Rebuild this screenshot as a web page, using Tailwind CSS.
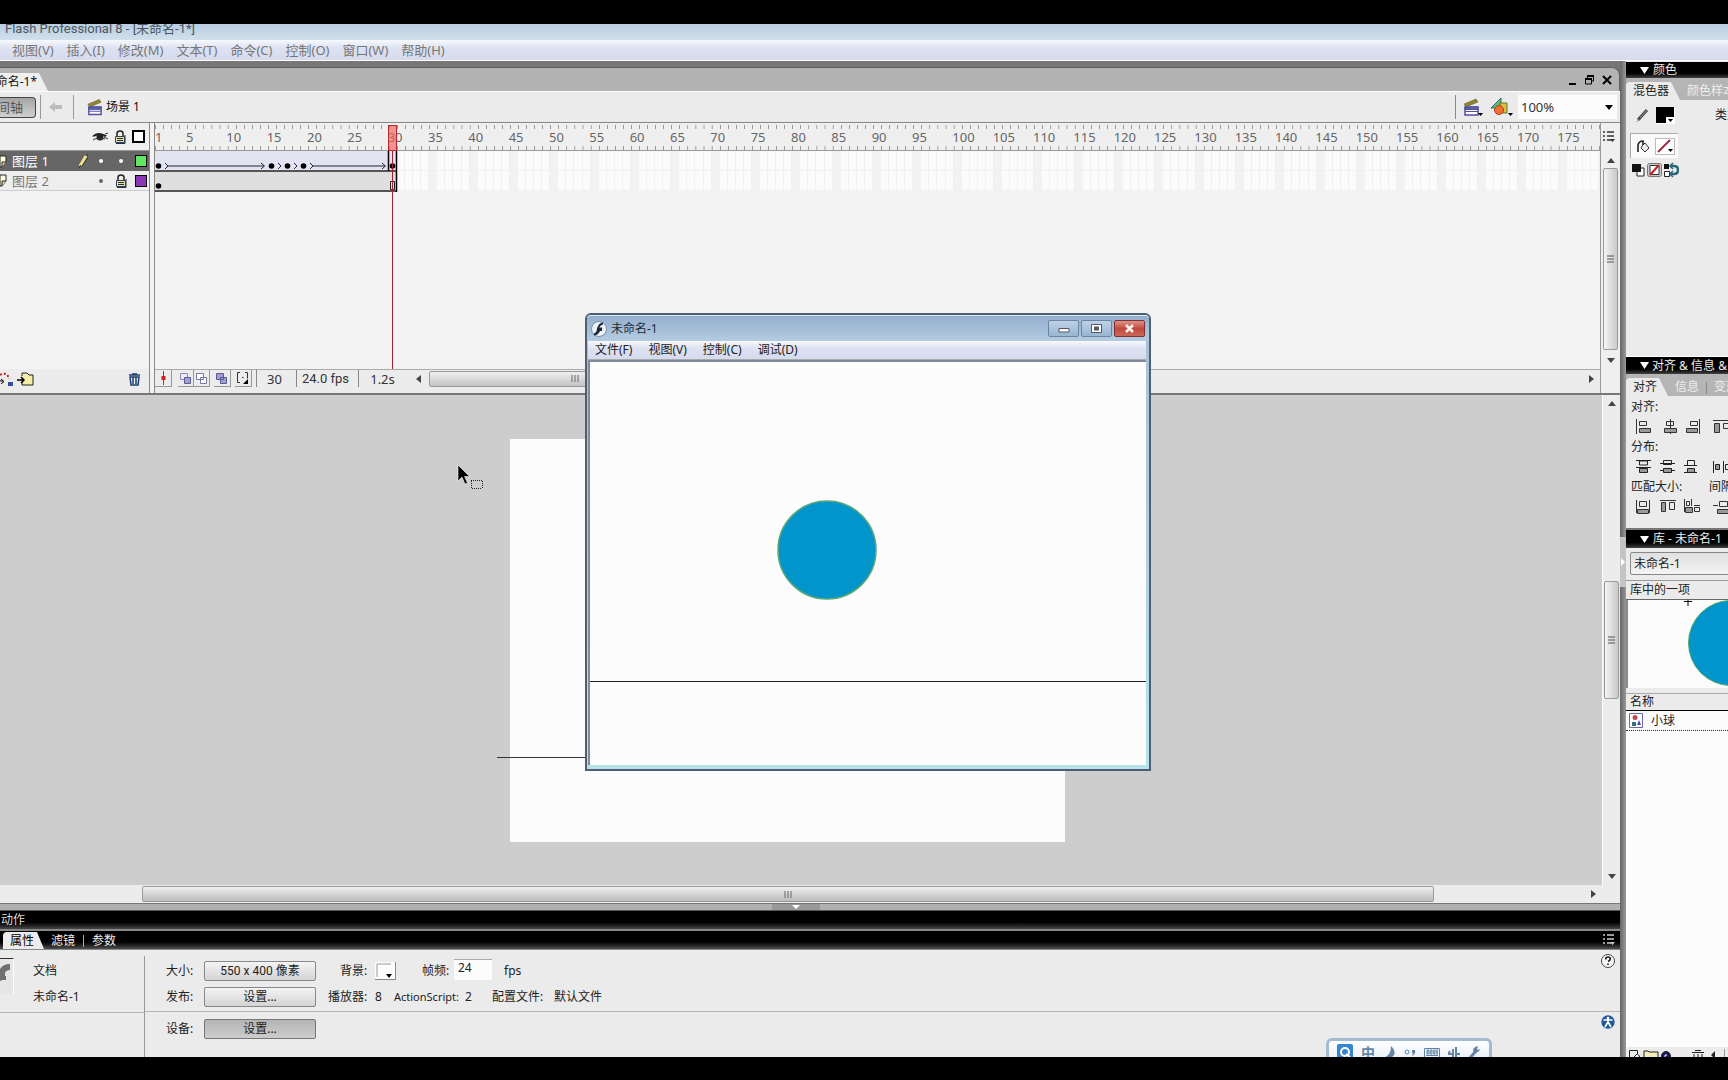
<!DOCTYPE html>
<html lang="zh-CN">
<head>
<meta charset="utf-8">
<title>Flash Professional 8 - [未命名-1*]</title>
<script src="https://cdn.jsdelivr.net/npm/@tailwindcss/browser@4"></script>
</head>
<body class="h-screen flex flex-col overflow-hidden bg-black font-['Noto_Sans','Noto_Sans_CJK_SC',sans-serif] text-[12px] leading-4 text-[#222] whitespace-nowrap">

<svg class="hidden">
  <defs>
    <symbol id="lock" viewBox="0 0 12 14"><path d="M3 7V3.500Q3 1 6 1T9 3.500V7" fill="none" stroke="#222" stroke-width="1.500"/><path d="M1.500 6.500h9v6h-9z" fill="#e8e0a8" stroke="#345"/><path d="M11 5v8.500H2M3 8.500h6M3 10.500h6" stroke="#234" fill="none"/></symbol>
    <symbol id="menu" viewBox="0 0 12 11"><path d="M0 1h2M0 5h2M0 9h2M4 1h7M4 5h7M4 9h4" stroke="currentColor" stroke-width="1.500"/><path d="M7 8h5l-2.500 3z" fill="currentColor"/></symbol>
    <symbol id="page" viewBox="0 0 7 13"><path d="M0 1h6v6l-4 5H0z" fill="#ffffe0" stroke="#222"/><path d="M6 7H2v5" fill="#d8d8a0" stroke="#222"/></symbol>
    <symbol id="clap" viewBox="0 0 18 18"><path d="M2 6 14 1l2 3L4 9z" fill="#8d8430" stroke="#5a5420" stroke-width=".5"/><path d="M3 9h13v8H3z" fill="#fff" stroke="#5050a0" stroke-width="1.500"/><path d="M3 9h13v2.500H3zM3 13.500h13" fill="#6060a8" stroke="#5050a0"/></symbol>
  </defs>
</svg>

<div class="h-6 shrink-0"></div>

<header class="shrink-0">
  <div class="h-4 overflow-hidden bg-linear-to-b from-[#b9cde0] to-[#d2e0ec] flex items-center pl-[5px] text-[13px] text-[#4a5662] font-['Roboto','Noto_Sans_CJK_SC',sans-serif]"><h1 class="-mt-1.5">Flash Professional 8 - [未命名-1*]</h1></div>
  <nav class="h-5 flex items-center gap-[13px] pl-3 pb-px text-[13px] text-[#777] bg-linear-to-b from-[#f8f9fd] via-[#dde2f2] via-40% to-[#d5dbee]">
    <button>视图(V)</button><button>插入(I)</button><button>修改(M)</button><button>文本(T)</button><button>命令(C)</button><button>控制(O)</button><button>窗口(W)</button><button>帮助(H)</button>
  </nav>
  <div class="h-px bg-white"></div>
</header>

<div class="flex-1 min-h-0 flex bg-[#777]">

  <!-- document column -->
  <main class="flex-1 min-w-0 flex flex-col pt-1.5">
    <div class="h-6 shrink-0 flex justify-between bg-[#b3b3b3] rounded-tr-lg border-t border-r border-[#606060]">
      <div class="w-12 h-[18px] self-end overflow-hidden bg-[#efefef] [clip-path:polygon(0_0,39px_0,48px_100%,0_100%)] flex items-center justify-end pr-[11px] text-[#111]"><span>未命名-1*</span></div>
      <div class="flex items-center gap-px pr-1">
        <button aria-label="最小化" class="size-4 grid place-items-center"><svg width="12" height="12"><path d="M2 10h7" stroke="#000" stroke-width="2"/></svg></button>
        <button aria-label="还原" class="size-4 grid place-items-center"><svg width="12" height="12" fill="none" stroke="#000"><path d="M1.500 5v5h6V5zM3.500 4V1.500h6V7H8"/><path d="M1 5h7M3 2h7" stroke-width="2"/></svg></button>
        <button aria-label="关闭" class="size-4 grid place-items-center"><svg width="12" height="12"><path d="m2 2 8 8m0-8-8 8" stroke="#000" stroke-width="2"/></svg></button>
      </div>
    </div>

    <div class="h-8 shrink-0 flex items-center bg-[#ebebeb] border-t border-t-white border-b border-b-[#888]">
      <button class="w-9 h-[21px] shrink-0 overflow-hidden flex justify-end items-center pr-3 text-[13px] text-[#555] rounded-r border border-l-0 border-[#444] bg-linear-to-b from-[#a5a5a5] to-[#d0d0d0]">时间轴</button>
      <div class="ml-1 w-px h-6 bg-[#999]"></div>
      <svg class="ml-2" width="14" height="12"><path d="M0 6 6 1v3h7v4H6v3z" fill="#bdbdbd"/></svg>
      <div class="ml-2.5 w-px h-6 bg-[#999]"></div>
      <svg class="ml-3" width="17" height="18"><use href="#clap"/></svg>
      <span class="ml-[3px] text-[#111]">场景 1</span>
      <div class="ml-auto w-px h-6 bg-[#888]"></div>
      <button aria-label="编辑场景" class="ml-1.5"><svg width="22" height="18"><use href="#clap" width="18" height="18"/><path d="M16 15h5l-2.500 3z"/></svg></button>
      <button aria-label="编辑元件" class="ml-1.5"><svg width="24" height="18"><path d="M1 10 11 0v10z" fill="#5fb890" stroke="#25704c"/><path d="M10 5h7v10h-7z" fill="#d8c040" stroke="#75702a"/><circle cx="9" cy="12" r="4.500" fill="#f07030" stroke="#b04018"/><path d="M18 15h5l-2.500 3z"/></svg></button>
      <label class="relative ml-1 mr-[3px]"><select aria-label="缩放比例" class="appearance-none w-[99px] h-6 pl-[3px] bg-[#fcfcfc] text-[13px] text-[#333]"><option>100%</option></select><svg class="absolute right-1 top-2.5 pointer-events-none" width="8" height="5"><path d="M0 0h8L4 5z"/></svg></label>
    </div>

    <!-- timeline -->
    <section class="h-[272px] shrink-0 flex bg-[#f3f3f3] border-b-2 border-[#777]">
      <div class="w-[150px] shrink-0 flex flex-col border-r border-[#888]">
        <div class="h-7 flex items-center justify-end gap-1.5 pr-1 border-b border-[#999] bg-[#efefef]">
          <svg width="16" height="11"><path d="M0 5.500Q5-1 15 4.500L13 6Q8 2 3 5.500z" fill="#222"/><circle cx="8" cy="6" r="3.500" fill="#222"/><path d="M1 9q4-3 12-1M13 3l3-1M12 6l4 2" fill="none" stroke="#333"/></svg>
          <svg width="12" height="14"><use href="#lock"/></svg>
          <div class="size-[13px] border-2 border-black bg-white"></div>
        </div>
        <div class="h-5 flex items-center bg-[#666] text-white text-[13px]">
          <svg width="7" height="13"><use href="#page"/></svg><span class="ml-[5px] w-[65px]">图层 1</span>
          <svg class="ml-px" width="11" height="15"><path d="M2 12 8 2" stroke="#f0e090" stroke-width="3"/><path d="m1 14 2-3M9 2l1-2M3.500 13 10 3" stroke="#332"/></svg>
          <i class="ml-2.5 size-1 rounded-full bg-white"></i><i class="ml-4 size-1 rounded-full bg-white"></i><i class="ml-3 size-3 bg-[#5fe85f] border border-black"></i>
        </div>
        <div class="h-5 flex items-center text-[#777] text-[13px] border-b border-[#ccc] bg-[#eee]">
          <svg width="7" height="13"><use href="#page"/></svg><span class="ml-[5px] w-[87px]">图层 2</span>
          <i class="size-1 rounded-full bg-[#666]"></i><svg class="ml-3" width="12" height="14"><use href="#lock"/></svg><i class="ml-2 size-3 bg-[#8c35b5] border border-black"></i>
        </div>
        <div class="flex-1"></div>
        <div class="h-6 flex items-center bg-[#ececec] pb-1">
          <svg width="14" height="15"><path d="M0 3q7-4 9 4" fill="none" stroke="#c02020" stroke-width="2" stroke-dasharray="2 2"/><path d="M0 9h3M1 7l3 2.500L1 12" stroke="#000" fill="none"/><path d="M8 10h5v4H8z" fill="#3050a0"/></svg>
          <svg class="ml-[3px]" width="17" height="15"><path d="M5 4V1h5l2 2h4v10H5v-3" fill="#f5eca8" stroke="#222"/><path d="M0 8h7M4 5l3 3-3 3" stroke="#000" stroke-width="1.500" fill="none"/></svg>
          <button aria-label="删除图层" class="ml-auto mr-2"><svg width="13" height="14"><path d="M1 3h11M4 2h5M2 5l1 8h7l1-8zM5 5v7M8 5v7" fill="none" stroke="#1d3f6e" stroke-width="1.500"/></svg></button>
        </div>
      </div>
      <div class="w-1 shrink-0"></div>
      <div class="flex-1 min-w-0 flex flex-col border-l border-[#888]">
        <div class="flex-1 relative overflow-hidden">
          <div id="ruler" class="h-7 w-[1452px] grid grid-cols-36 bg-[#efefef] border-b border-[#999] text-[13px] text-[#666]"></div>
          <div id="frames" class="h-10 w-[1452px] grid grid-cols-36 bg-[#fbfbfb]"></div>
          <svg class="absolute left-0 top-7" width="244" height="42">
            <defs><pattern id="arrowTail" width="2" height="2" patternUnits="userSpaceOnUse"><rect width="2" height="2" fill="#e8e8f5"/><path d="M0 0h1v1H0zM1 1h1v1H1z" fill="#dedef0"/></pattern></defs>
            <path d="M0 0h242v20H0z" fill="url(#arrowTail)"/><path d="M0 21h242v19H0z" fill="#dfdfdf"/>
            <path d="M0 20h242M0 40h242" stroke="#555" stroke-width="2"/><path d="M241.500 0v41M233.500 0v20" stroke="#000" stroke-width="1.500"/>
            <g fill="#000"><circle cx="3.500" cy="15" r="2.800"/><circle cx="116.500" cy="15" r="2.800"/><circle cx="132.500" cy="15" r="2.800"/><circle cx="148.500" cy="15" r="2.800"/><circle cx="237.500" cy="15" r="2.800"/><circle cx="3.500" cy="35" r="2.800"/></g>
            <path d="M13 15h96M106 12l3.500 3-3.500 3M10 12l3 3-3 3M123 12l3 3-3 3M139 12l3 3-3 3M155 12l3 3-3 3M158 15h72M227 12l3.500 3-3.500 3" fill="none" stroke="#223"/>
            <path d="M235.500 30.500h4v8h-4z" fill="none" stroke="#222"/>
          </svg>
          <div class="absolute left-[237px] top-7 bottom-0 w-px bg-[#a82030]"></div>
          <div class="absolute left-[233px] top-0.5 h-[26px] w-[9px] bg-[#f06060]/65 border border-[#b82828]"></div>
        </div>
        <div class="h-6 shrink-0 flex items-start gap-1 bg-[#ececec] text-[13px] text-[#333] border-t border-[#aaa]">
          <button aria-label="滚动到播放头" class="w-[17px] h-[17px] border-r border-b border-[#999] grid place-items-center"><svg width="5" height="14"><path d="M2.500 0v14" stroke="#d02020"/><path d="M.5 5h4v4h-4z" fill="#d02020"/></svg></button>
          <div class="flex ml-0.5">
            <button aria-label="绘图纸外观" class="w-4 h-[17px] border-r border-b border-[#999] grid place-items-center"><svg width="12" height="11"><path d="M.5.5h7v6h-7z" fill="#eee" stroke="#8888b8"/><path d="M4.500 4.500h6v6h-6z" fill="#a0a0cc" stroke="#5a5a98"/></svg></button>
            <button aria-label="绘图纸外观轮廓" class="w-4 h-[17px] border-r border-b border-[#999] grid place-items-center"><svg width="12" height="11"><path d="M.5.5h7v6h-7zM4.500 4.500h6v6h-6z" fill="#fff" stroke="#7777a8"/></svg></button>
          </div>
          <button aria-label="编辑多个帧" class="w-[17px] h-[17px] border-r border-b border-[#999] grid place-items-center"><svg width="12" height="11"><path d="M.5.5h7v6h-7zM4.500 4.500h6v6h-6z" fill="#a0a0cc" stroke="#5a5a98"/></svg></button>
          <button aria-label="修改绘图纸标记" class="w-[17px] h-[17px] border-r border-b border-[#999] grid place-items-center"><svg width="12" height="12"><path d="M3 .5H.5v10H3M8 .5h2.500v6M5 5.500h1.500" fill="none" stroke="#333"/><path d="M11 7v5H6z"/></svg></button>
          <span class="w-9 h-[17px] pt-px text-center border-l border-[#888]">30</span>
          <span class="w-[58px] h-[17px] pt-px text-center border-l border-[#888] font-['Roboto',sans-serif]">24.0 fps</span>
          <span class="w-12 h-[17px] pt-px text-center border-l border-[#888]">1.2s</span>
          <div class="flex-1 h-[17px] flex items-center pl-1.5 pr-1.5">
            <svg width="5" height="8"><path d="M5 0v8L0 4z" fill="#444"/></svg>
            <div class="ml-2 w-[291px] h-4 rounded-xs border border-[#999] bg-linear-to-b from-[#efefef] to-[#c4c4c4] grid place-items-center"><svg width="8" height="7"><path d="M1 0v7M4 0v7M7 0v7" stroke="#666"/></svg></div>
            <svg class="ml-auto" width="5" height="8"><path d="M0 0v8l5-4z" fill="#444"/></svg>
          </div>
        </div>
      </div>
      <div class="w-5 shrink-0 flex flex-col items-center border-l border-[#999] bg-[#efefef]">
        <svg class="mt-2 mr-1 text-[#333] shrink-0" width="12" height="11"><use href="#menu"/></svg>
        <svg class="mt-4 shrink-0" width="8" height="5"><path d="M0 5h8L4 0z" fill="#444"/></svg>
        <div class="mt-[5px] w-[15px] h-[182px] rounded-xs border border-[#999] bg-linear-to-r from-[#f4f4f4] to-[#cacaca] grid place-items-center"><svg width="7" height="8"><path d="M0 1h7M0 4h7M0 7h7" stroke="#555"/></svg></div>
        <svg class="mt-2" width="8" height="5"><path d="M0 0h8L4 5z" fill="#444"/></svg>
      </div>
    </section>

    <!-- stage -->
    <section class="flex-1 min-h-0 flex">
      <div class="flex-1 relative overflow-hidden bg-[#cdcdcd]">
        <div class="absolute left-[510px] top-11 w-[555px] h-[403px] bg-[#fcfcfc]"></div>
        <div class="absolute left-[497px] top-[362px] w-[480px] h-px bg-[#333]"></div>
        <svg class="absolute left-[457px] top-[69px]" width="28" height="28"><path d="M1 1v16l4-4 3 7 2.500-1-3-6.500h5z" fill="#000" stroke="#eee" stroke-width=".6"/><rect x="14" y="16" width="11" height="8" fill="none" stroke="#222" stroke-dasharray="1 1" shape-rendering="crispEdges"/></svg>
      </div>
      <div class="w-[18px] shrink-0 flex flex-col items-center bg-[#ececec] border-l border-white">
        <svg class="mt-1.5 shrink-0" width="8" height="5"><path d="M0 5h8L4 0z" fill="#444"/></svg>
        <div class="flex-58"></div>
        <div class="w-[15px] h-[118px] rounded-xs border border-[#999] bg-linear-to-r from-[#f4f4f4] to-[#cacaca] grid place-items-center"><svg width="7" height="8"><path d="M0 1h7M0 4h7M0 7h7" stroke="#555"/></svg></div>
        <div class="flex-58"></div>
        <svg class="mb-1.5 shrink-0" width="8" height="5"><path d="M0 0h8L4 5z" fill="#444"/></svg>
      </div>
    </section>
    <div class="h-[19px] shrink-0 flex items-center bg-[#ececec] border-b border-[#777] pl-[142px] pr-6">
      <div class="w-[1292px] h-4 rounded-xs border border-[#999] bg-linear-to-b from-[#f0f0f0] to-[#bcbcbc] grid place-items-center"><svg width="8" height="7"><path d="M1 0v7M4 0v7M7 0v7" stroke="#666"/></svg></div>
      <svg class="ml-auto" width="5" height="8"><path d="M0 0v8l5-4z" fill="#444"/></svg>
    </div>
    <div class="h-1.5 shrink-0 bg-[#b0b0b0] flex justify-center pr-7"><div class="w-12 bg-[#999] grid place-items-center"><svg width="8" height="4"><path d="M0 0h8L4 4z" fill="#fff"/></svg></div></div>

    <div class="h-[21px] shrink-0 flex items-center pl-px border-t border-[#555] border-b-2 border-b-[#888] bg-linear-to-b from-black from-50% to-[#484848] text-[#ddd]">动作</div>
    <div class="h-[19px] shrink-0 flex items-end bg-linear-to-b from-black from-50% to-[#505050] border-b border-[#888] text-[#eee]">
      <button class="ml-[3px] h-[17px] w-[41px] pl-[7px] text-left bg-[#ececec] text-black rounded-tl [clip-path:polygon(0_0,34px_0,41px_100%,0_100%)]">属性</button>
      <button class="ml-[7px] h-[17px]">滤镜</button><i class="mx-2 w-px h-3 mb-0.5 bg-[#aaa]"></i><button class="h-[17px]">参数</button>
      <svg class="ml-auto mr-[5px] mb-1 text-[#ccc]" width="12" height="11"><use href="#menu"/></svg>
    </div>

    <!-- properties -->
    <section class="h-[107px] shrink-0 relative overflow-hidden flex bg-[#ebebeb] text-[12px]">
      <div class="w-36 shrink-0 flex flex-col">
        <div class="h-[62px] flex items-start">
          <div class="mt-2 w-3.5 h-9 border-t border-r border-t-[#333] border-r-white bg-[#e6e6e6]"><svg width="13" height="28"><path d="M0 10Q3 5 10 5v6q-4 0-5 3v3h1v4H2q-1 1-2 1z" fill="#707070"/></svg></div>
          <div class="ml-[19px] mt-[13px] flex flex-col gap-2.5"><span>文档</span><span>未命名-1</span></div>
        </div>
        <div class="flex-1 border-t border-[#b5b5b5]"></div>
      </div>
      <div class="w-px mt-1.5 bg-[#999]"></div>
      <div class="flex-1 flex flex-col">
        <div class="h-[62px] flex border-b border-[#b5b5b5]">
          <div class="flex-1 pl-[21px] pt-[9px] flex flex-col">
            <div class="h-6 flex items-center">
              <label for="size" class="w-[38px]">大小:</label><button id="size" class="w-28 h-5 rounded-xs border border-[#888] bg-linear-to-b from-[#f4f4f4] to-[#d4d4d4] font-['Roboto','Noto_Sans_CJK_SC',sans-serif]">550 x 400 像素</button>
              <span class="ml-6 w-[35px]">背景:</span><button aria-label="背景颜色" class="w-[21px] h-[18px] bg-[#fdfdfd] border-r border-b border-[#888] relative"><svg width="20" height="17"><path d="M2 15V2h14" fill="none" stroke="#999"/><path d="M11 12h6l-3 4z"/></svg></button>
              <label for="rate" class="ml-[26px] w-8">帧频:</label><input id="rate" value="24" class="w-[38px] h-[21px] mb-1 pl-1 pb-1 bg-[#fcfcfc] border-t border-[#aaa] outline-none"><span class="ml-3">fps</span>
            </div>
            <div class="h-7 flex items-center">
              <label for="pub" class="w-[38px]">发布:</label><button id="pub" class="w-28 h-5 rounded-xs border border-[#888] bg-linear-to-b from-[#f4f4f4] to-[#d4d4d4]">设置...</button>
              <span class="ml-3 w-[47px]">播放器:</span><span class="w-[19px]">8</span><span class="w-[71px] text-[11px]">ActionScript:</span><span class="w-[27px]">2</span><span class="w-[62px]">配置文件:</span><span>默认文件</span>
            </div>
          </div>
          <button aria-label="帮助" class="self-start mt-[3px] mr-1"><svg width="16" height="16"><circle cx="8" cy="8" r="6.500" fill="#f8f8f8" stroke="#444"/><path d="M5.700 6.500q0-2.500 2.300-2.500t2.300 2Q10.300 7.300 8 8.500M8 10.500v1.500" fill="none" stroke="#222" stroke-width="1.700"/></svg></button>
        </div>
        <div class="flex-1 flex justify-between pl-[21px] pt-[3px]">
          <div class="h-7 flex items-center"><label for="dev" class="w-[38px]">设备:</label><button id="dev" class="w-28 h-5 rounded-xs border border-[#777] bg-linear-to-b from-[#b4b4b4] to-[#cccccc]">设置...</button></div>
          <button aria-label="辅助功能" class="self-start mr-1"><svg width="16" height="14"><circle cx="8" cy="7" r="6.700" fill="#245a98"/><path d="M3.500 5h9M8 4v4M8 7l-3 5M8 7l3 5" stroke="#fff" stroke-width="1.600"/><circle cx="8" cy="3" r="1.300" fill="#fff"/></svg></button>
        </div>
      </div>
      <!-- input method bar -->
      <div class="absolute right-[128px] top-[88px] w-[166px] h-8 rounded-t-md border-3 border-b-0 border-[#a3bbd2] bg-linear-to-b from-white to-[#dce8f4] flex items-start justify-between px-2 pt-[3px] text-[#6385a5]">
        <svg width="16" height="17"><rect width="16" height="17" rx="2" fill="#3585cf"/><circle cx="8" cy="8" r="4" fill="none" stroke="#fff" stroke-width="2"/><path d="m9 10 4 3" stroke="#fff" stroke-width="2"/></svg>
        <span class="pt-px text-[14px] leading-4 font-bold">中</span>
        <svg width="13" height="16" fill="currentColor"><path d="M8 2q5 5 3 9t-11 3q8-2 8-12"/></svg>
        <svg width="12" height="16"><circle cx="3" cy="8" r="2" fill="none" stroke="currentColor"/><path d="M8 6h3q1 4-3 6l1-3H8z" fill="currentColor"/></svg>
        <svg width="16" height="16"><path d="M.5 4.500h15v9H.5zM2 7h12M2 9h12M2 11.500h12M4 5v6M7 5v6M10 5v6M13 5v6" fill="none" stroke="currentColor"/></svg>
        <svg width="12" height="16"><path d="M5 5v11M8 3v10M0 10h5M8 10h4M2 7 0 10" stroke="currentColor" stroke-width="2"/></svg>
        <svg width="13" height="16"><path d="m1 15 7-8" stroke="currentColor" stroke-width="3"/><path d="M12 5q-1 4-5 3T7 3l3-1-1 3 1 1z" fill="currentColor"/></svg>
      </div>
    </section>
  </main>

  <div class="w-1.5 shrink-0 flex flex-col bg-linear-to-r from-[#666] to-[#999]"><div class="mt-[476px] h-[50px] bg-[#c4c4c4] flex items-center"><svg width="5" height="8"><path d="M1 0v8l4-4z" fill="#fff"/></svg></div></div>

  <!-- panel dock -->
  <aside class="w-[102px] shrink-0 overflow-hidden flex flex-col bg-[#ebebeb]">
    <h2 class="mt-px h-4 shrink-0 flex items-center gap-1 pl-3.5 bg-linear-to-b from-black from-60% to-[#444] text-[#eee]"><svg width="9" height="7"><path d="M0 0h9L4.500 7z" fill="#fff"/></svg>颜色</h2>
    <div class="h-[22px] shrink-0 flex items-end bg-[#b5b5b5]"><button class="w-[54px] h-[18px] shrink-0 pl-[7px] text-left bg-[#ebebeb] text-[#222] rounded-tl [clip-path:polygon(0_0,45px_0,54px_100%,0_100%)]">混色器</button><button class="pl-[7px] h-[18px] text-[#eee]">颜色样本</button></div>
    <div class="h-[256px] shrink-0 flex flex-col pt-px">
      <div class="h-7 flex items-center pl-2.5"><svg width="14" height="14"><path d="M2 12 11 2" stroke="#444" stroke-width="3"/><path d="m1 14 2-3M4 10l7-8" stroke="#999"/></svg><button aria-label="笔触颜色" class="ml-1.5 w-[19px] h-[17px] bg-black border-r border-b border-white"><svg width="18" height="16"><path d="M10 10h8v6h-8z" fill="#fff"/><path d="M12 12h5l-2.500 3z"/></svg></button><span class="ml-auto -mr-0.5 w-[15px]">类型:</span></div>
      <div class="mt-1 ml-1 w-12 h-[25px] bg-[#fafafa] border-t border-l border-[#aaa] flex items-center pl-1"><svg width="16" height="15"><path d="m7 7 3-3 4 5-4 4-4-4z" fill="#eee" stroke="#333"/><path d="M8 6V2Q4 2 3 6v7" fill="none" stroke="#222" stroke-width="1.600"/></svg><button aria-label="填充颜色" class="ml-1 w-5 h-[17px] bg-white border border-[#bbb]"><svg width="18" height="15"><path d="M2 13 14 1" stroke="#a02840" stroke-width="2"/><path d="M12 10h5l-2.500 3z"/></svg></button></div>
      <div class="mt-1 ml-1.5 flex items-center gap-0.5">
        <svg width="13" height="16"><path d="M5 6h7v8H5z" fill="#fff" stroke="#222"/><path d="M0 2h9v8H0z" fill="#111"/></svg>
        <svg width="15" height="16"><rect x=".5" y="1.500" width="14" height="13" rx="2" fill="#ccc" stroke="#777"/><path d="M3 3.500h9v9H3z" fill="#fff" stroke="#333"/><path d="m3 13 9-10" stroke="#c02020" stroke-width="2"/></svg>
        <svg width="15" height="16"><path d="M0 2h5v5H0z" fill="#111"/><path d="M.5 9.500h5v5h-5z" fill="#fff" stroke="#222"/><path d="M6 4h4q4 0 4 4t-4 4H6" fill="none" stroke="#286878" stroke-width="2.500"/><path d="m9 1-3 3 3 3M9 9l-3 3 3 3" fill="none" stroke="#286878" stroke-width="1.500"/></svg>
      </div>
    </div>
    <h2 class="h-[18px] shrink-0 flex items-center gap-[3px] pl-3.5 border-t border-white bg-linear-to-b from-black from-60% to-[#444] text-[#eee]"><svg class="shrink-0" width="9" height="7"><path d="M0 0h9L4.500 7z" fill="#fff"/></svg>对齐 &amp; 信息 &amp; 变形</h2>
    <div class="h-[22px] shrink-0 flex items-end bg-[#b5b5b5]"><button class="w-[42px] h-[18px] shrink-0 pl-[7px] text-left bg-[#ebebeb] rounded-tl [clip-path:polygon(0_0,33px_0,42px_100%,0_100%)]">对齐</button><button class="pl-[7px] h-[18px] text-[#eee]">信息</button><i class="mx-[7px] w-px h-3 mb-0.5 shrink-0 bg-[#888]"></i><button class="h-[18px] text-[#eee]">变形</button></div>
    <div class="h-[134px] shrink-0 pl-[5px] pt-[3px] border-b-2 border-[#777]">
      <p>对齐:</p>
      <svg class="mt-[3px] mb-[3px]" width="110" height="18" fill="none" stroke="#333"><path d="M5.500 1v15M8.500 3.500h7v4h-7zM39.500 1v15M35.500 3.500h7v4h-7zM68.500 1v15M59.500 3.500h7v4h-7zM82 2.500h16M92.500 5.500h5v5h-5z"/><path d="M8.500 10.500h11v4h-11zM33.500 10.500h12v4h-12zM55.500 10.500h11v4h-11zM83.500 5.500h5v9h-5z" fill="#999"/></svg>
      <p>分布:</p>
      <svg class="mt-[3px] mb-[3px]" width="110" height="18" fill="none" stroke="#222"><path d="M5 2.500h15M8.500 3h8v4h-8zM5 9.500h15M29 5.500h15M32.500 2.500h8v4h-8zM29 12.500h15M53 7.500h13M56.500 2.500h7v5h-7zM53 14.500h13M82.500 3v12M92.500 3v12M94.500 6.500h5v5h-5z"/><path d="M8.500 10.500h8v4h-8zM32.500 10.500h8v4h-8zM56.500 10.500h7v4h-7zM84.500 6.500h4v5h-4z" fill="#999"/></svg>
      <p class="flex"><span class="w-[78px] shrink-0">匹配大小:</span><span>间隔:</span></p>
      <svg class="mt-[3px]" width="110" height="18" fill="none" stroke="#333"><path d="M5.500 2v13M18.500 2v13M8.500 3.500h7v5h-7zM29 2.500h16M38.500 4.500h5v7h-5zM53.500 1v13M60.500 1v7M55.500 3.500h3v4h-3zM63 7.500h6M63.500 9.500h5v4h-5zM82 7.500h5M88.500 3.500h8v5h-8z"/><path d="M6.500 11.500h11v4h-11zM30.500 4.500h4v9h-4zM54.500 9.500h7v5h-7zM86.500 11.500h11v4h-11z" fill="#999"/></svg>
    </div>
    <h2 class="h-[18px] shrink-0 flex items-center gap-1 pl-3.5 bg-linear-to-b from-black from-60% to-[#444] text-[#eee]"><svg class="shrink-0" width="9" height="7"><path d="M0 0h9L4.500 7z" fill="#fff"/></svg>库 - 未命名-1</h2>
    <div class="h-8 shrink-0 pl-1 pt-1"><select aria-label="库" class="appearance-none w-[140px] h-[23px] pl-[3px] rounded-xs border border-[#888] bg-linear-to-b from-[#e0e0e0] to-[#f4f4f4]"><option>未命名-1</option></select></div>
    <p class="h-5 shrink-0 flex items-center pl-1 border-t border-[#999] border-b border-b-[#666]">库中的一项</p>
    <div class="h-[88px] shrink-0 overflow-hidden bg-[#fbfbfb] border-l-2 border-[#888]"><svg width="150" height="88"><circle cx="103" cy="43" r="42.500" fill="#0295cb" stroke="#5aa860"/><path d="M56 1.500h8M60 0v6" stroke="#000"/></svg></div>
    <table class="w-full shrink-0 mt-[5px] text-left border-collapse bg-[#fbfbfb]">
      <thead><tr class="h-[17px] bg-[#ebebeb] border-t border-[#aaa] border-b border-b-black"><th class="pl-1 py-0 font-normal">名称</th></tr></thead>
      <tbody><tr class="h-5 border-b border-dotted border-[#333]"><td class="p-0"><div class="flex items-center gap-2 pl-[3px]"><svg width="14" height="15"><path d="M.5.5h13v14H.5z" fill="#fff" stroke="#6868a8"/><circle cx="6" cy="4.500" r="2.500" fill="#c04848"/><path d="M3 9h4v4H3z" fill="#307070"/><path d="m8 12 2-5 2 5z" fill="#4848b0"/></svg>小球</div></td></tr></tbody>
    </table>
    <div class="flex-1 bg-[#fcfcfc]"></div>
    <div class="h-2.5 shrink-0 overflow-hidden bg-[#ececec] flex items-start pt-0.5 pl-0.5">
      <svg width="100" height="12" fill="none" stroke="#222"><path d="M1.500 12V1.500h8V5l2 2v5M5 9l4-4"/><path d="M16 12V2h4l1 1h9v9" fill="#f4eeb8"/><circle cx="38" cy="7" r="4.500" fill="#181860"/><path d="M37 10V6h2" stroke="#fff"/><path d="M64 3.500h12M67 1.500h6M66 5v7M70 5v7M74 5v7"/><path d="M87 2v8l-4-4z" fill="#222" stroke="none"/><path d="M96.500 0v12" stroke="#999"/></svg>
    </div>
  </aside>
</div>

<div class="h-[23px] shrink-0"></div>

<!-- test movie window -->
<div class="absolute left-[585px] top-[313px] w-[566px] h-[458px] flex flex-col rounded-t-md border-2 border-[#4d5f70] bg-linear-to-b from-[#a6bfd8] to-[#b8e2ea]">
  <div class="h-[26px] shrink-0 flex items-center pl-1 pr-1 rounded-t-sm border-t border-[#dce8f2] bg-linear-to-b from-[#94afcc] to-[#b4cce2]">
    <svg width="16" height="16"><circle cx="8" cy="8" r="7.500" fill="#eef3f8" stroke="#7890a8"/><path d="M12 2.500Q8 3 7 8t-4 5.500q4 0 5.500-4.500H11M6 7.500h5" fill="none" stroke="#1a2a3c" stroke-width="1.800"/></svg>
    <span class="ml-1 text-[#1c2c3c]">未命名-1</span>
    <div class="ml-auto flex gap-0.5">
      <button aria-label="最小化" class="w-[31px] h-[17px] rounded-xs border border-[#6b86a2] bg-linear-to-b from-[#bfd2e6] to-[#98b5d2] grid place-items-center"><svg width="12" height="9"><path d="M1 4.500h10v3.500H1z" fill="#fff" stroke="#556"/></svg></button>
      <button aria-label="最大化" class="w-[31px] h-[17px] rounded-xs border border-[#6b86a2] bg-linear-to-b from-[#bfd2e6] to-[#98b5d2] grid place-items-center"><svg width="11" height="9"><path d="M2 1.500h7v6H2z" fill="#556" stroke="#fff" stroke-width="2"/><path d="M.5.500h10v8H.5z" fill="none" stroke="#556"/></svg></button>
      <button aria-label="关闭" class="w-[31px] h-[17px] rounded-xs border border-[#803030] bg-linear-to-b from-[#dc9488] via-[#c04a3c] to-[#cc6858] grid place-items-center"><svg width="11" height="9"><path d="m2 1 7 7M9 1 2 8" stroke="#f8f4f4" stroke-width="2.500"/></svg></button>
    </div>
  </div>
  <nav class="ml-px mr-[3px] h-[19px] shrink-0 flex items-center gap-4 pl-[7px] text-[#222] bg-linear-to-b from-[#f8f9fd] via-[#dde2f2] via-40% to-[#d5dbee] border-b border-[#aaa]"><button>文件(F)</button><button>视图(V)</button><button>控制(C)</button><button>调试(D)</button></nav>
  <div class="flex-1 ml-px mr-[3px] mb-1 bg-[#fcfcfc] border-l-2 border-t-2 border-[#818a98]">
    <svg class="w-full h-full"><circle cx="237" cy="188" r="49" fill="#0295cb" stroke="#5aa878" stroke-width="1.500"/><rect x="0" y="319" width="100%" height="1" fill="#222"/></svg>
  </div>
</div>

<script>
  // 180 frames in 36 groups of five; each number stands over its group's last frame
  const ruler = document.getElementById('ruler');
  const frames = document.getElementById('frames');
  for (let g = 0; g < 36; g++) {
    ruler.insertAdjacentHTML('beforeend',
      '<div class="flex items-center overflow-visible bg-[linear-gradient(to_right,#999_1px,transparent_1px),linear-gradient(to_right,#999_1px,transparent_1px)] bg-[length:20%_4px] bg-[position:0_2px,0_100%] bg-repeat-x">' +
      (g === 0 ? '<span class="w-[31px] shrink-0">1</span>' : '<span class="w-[31px] shrink-0"></span>') +
      (g < 35 ? '<span class="w-0">' + (g + 1) * 5 + '</span>' : '') + '</div>');
    const cell = '<i class="border-r border-[#f0f0f0]"></i>';
    const row = '<div class="h-5 border-b border-[#f0f0f0] grid grid-cols-5">' + cell.repeat(4) + '<i class="bg-[#f2f2f2]"></i></div>';
    frames.insertAdjacentHTML('beforeend', '<div class="flex flex-col">' + row + row + '</div>');
  }
</script>
</body>
</html>
